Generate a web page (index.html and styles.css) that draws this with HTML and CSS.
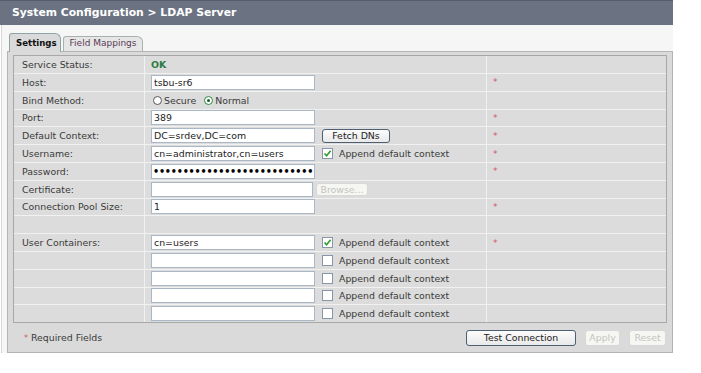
FILE: index.html
```html
<!DOCTYPE html>
<html lang="en">
<head>
	<meta charset="UTF-8">
	<title>LDAP Server</title>
	<link rel="stylesheet" href="styles.css">
</head>
<body>
	<div class="page">
		<div class="titlebar">System Configuration &gt; LDAP Server</div>
		<div class="frame">
			<div class="tabs">
				<span class="tab current">Settings</span>
				<span class="tab">Field Mappings</span>
			</div>
			<div class="panel">
				<div class="grid">
					<div class="row">
						<div class="lbl">Service Status:</div>
						<div class="val"><span class="ok">OK</span></div>
						<div class="req"></div>
					</div>
					<div class="row">
						<div class="lbl">Host:</div>
						<div class="val"><input class="txt" type="text" value="tsbu-sr6"></div>
						<div class="req">*</div>
					</div>
					<div class="row">
						<div class="lbl">Bind Method:</div>
						<div class="val">
							<span class="radio"></span><span class="opt">Secure</span>
							<span class="radio on"></span><span class="opt">Normal</span>
						</div>
						<div class="req"></div>
					</div>
					<div class="row">
						<div class="lbl">Port:</div>
						<div class="val"><input class="txt" type="text" value="389"></div>
						<div class="req">*</div>
					</div>
					<div class="row">
						<div class="lbl">Default Context:</div>
						<div class="val"><input class="txt" type="text" value="DC=srdev,DC=com"><button class="btn fetch">Fetch DNs</button></div>
						<div class="req">*</div>
					</div>
					<div class="row">
						<div class="lbl">Username:</div>
						<div class="val"><input class="txt" type="text" value="cn=administrator,cn=users"><span class="check on"><svg width="9" height="9" viewBox="0 0 9 9"><path d="M1.5 4.5 L3.6 6.8 L7.6 1.8" fill="none" stroke="#2f9a2f" stroke-width="1.6"/></svg></span><span class="chk-text">Append default context</span></div>
						<div class="req">*</div>
					</div>
					<div class="row">
						<div class="lbl">Password:</div>
						<div class="val"><input class="txt pass" type="text" value="&#8226;&#8226;&#8226;&#8226;&#8226;&#8226;&#8226;&#8226;&#8226;&#8226;&#8226;&#8226;&#8226;&#8226;&#8226;&#8226;&#8226;&#8226;&#8226;&#8226;&#8226;&#8226;&#8226;&#8226;&#8226;&#8226;&#8226;&#8226;"></div>
						<div class="req">*</div>
					</div>
					<div class="row">
						<div class="lbl">Certificate:</div>
						<div class="val"><input class="txt file" type="text" value=""><button class="btn off browse">Browse...</button></div>
						<div class="req"></div>
					</div>
					<div class="row">
						<div class="lbl">Connection Pool Size:</div>
						<div class="val"><input class="txt" type="text" value="1"></div>
						<div class="req">*</div>
					</div>
					<div class="row">
						<div class="lbl"></div>
						<div class="val"></div>
						<div class="req"></div>
					</div>
					<div class="row">
						<div class="lbl">User Containers:</div>
						<div class="val"><input class="txt" type="text" value="cn=users"><span class="check on"><svg width="9" height="9" viewBox="0 0 9 9"><path d="M1.5 4.5 L3.6 6.8 L7.6 1.8" fill="none" stroke="#2f9a2f" stroke-width="1.6"/></svg></span><span class="chk-text">Append default context</span></div>
						<div class="req">*</div>
					</div>
					<div class="row">
						<div class="lbl"></div>
						<div class="val"><input class="txt" type="text" value=""><span class="check"></span><span class="chk-text">Append default context</span></div>
						<div class="req"></div>
					</div>
					<div class="row">
						<div class="lbl"></div>
						<div class="val"><input class="txt" type="text" value=""><span class="check"></span><span class="chk-text">Append default context</span></div>
						<div class="req"></div>
					</div>
					<div class="row">
						<div class="lbl"></div>
						<div class="val"><input class="txt" type="text" value=""><span class="check"></span><span class="chk-text">Append default context</span></div>
						<div class="req"></div>
					</div>
					<div class="row">
						<div class="lbl"></div>
						<div class="val"><input class="txt" type="text" value=""><span class="check"></span><span class="chk-text">Append default context</span></div>
						<div class="req"></div>
					</div>
				</div>
				<div class="footer">
					<span class="note"><span class="star">*</span> Required Fields</span>
					<button class="btn test">Test Connection</button>
					<button class="btn off apply">Apply</button>
					<button class="btn off reset">Reset</button>
				</div>
			</div>
		</div>
	</div>
</body>
</html>
```

FILE: styles.css
```css
*{
	margin: 0;
	padding: 0;
	box-sizing: border-box;
}
body{
	background: #fff;
	font-family: "DejaVu Sans", Verdana, sans-serif;
	font-size: 9.4px;
	color: #3a3a3a;
}
.page{
	width: 673px;
}
.titlebar{
	height: 25px;
	background: #6b7383;
	border-top: 1px solid #555d6a;
	color: #fff;
	font-weight: bold;
	font-size: 10.8px;
	padding: 5px 0 0 12px;
}
.frame{
	margin-left: 1px;
	border-left: 1px solid #d6d6d6;
	background: #f6f6f6;
	padding-top: 8px;
}
.tabs{
	display: flex;
	align-items: flex-end;
	margin-left: 7px;
	height: 18px;
	position: relative;
	z-index: 1;
}
.tab{
	height: 15px;
	border: 1px solid #a9b0b0;
	border-bottom: none;
	border-radius: 3px 6px 0 0;
	background: #e6e6e6;
	color: #5a3b57;
	padding: 1px 5px 0 6px;
	margin-right: 2px;
	font-size: 9px;
}
.tab.current{
	height: 19px;
	margin-bottom: -1px;
	background: #dadada;
	border-color: #8fa4a4;
	color: #111;
	font-weight: bold;
	font-size: 8.6px;
	padding: 4px 3px 0 6px;
}
.panel{
	margin-left: 5px;
	border: 1px solid #b4b4b4;
	background: #dadada;
	padding: 3px 5px 0 5px;
}
.grid{
	border: 1px solid #a8a8a8;
	background: #dcdcdc;
}
.row{
	display: grid;
	grid-template-columns: 131px 342px 1fr;
	height: 17.8px;
	border-top: 1px solid #f1f1f1;
}
.row:first-child{
	border-top: none;
	height: 17px;
}
.lbl{
	border-right: 1px solid #f1f1f1;
	padding-left: 8px;
	display: flex;
	align-items: center;
}
.val{
	border-right: 1px solid #f1f1f1;
	padding-left: 6px;
	display: flex;
	align-items: center;
}
.req{
	color: #d2566e;
	padding-left: 6px;
	display: flex;
	align-items: center;
	font-size: 9px;
}
.ok{
	color: #2b7a44;
	font-weight: bold;
}
.txt{
	width: 164px;
	height: 15px;
	border: 1px solid #a9b7c6;
	background: #fff;
	font-family: "DejaVu Sans", Verdana, sans-serif;
	font-size: 9.4px;
	color: #222;
	padding: 0 2px;
	outline: none;
}
.txt.file{
	width: 162px;
}
.txt.pass{
	font-size: 9.6px;
	font-weight: bold;
	letter-spacing: -0.2px;
	padding: 0 1px;
	color: #000;
}
.radio{
	width: 9px;
	height: 9px;
	border: 1px solid #555;
	border-radius: 50%;
	background: #fff;
	margin: 0 2px 0 2px;
	position: relative;
}
.radio.on{
	border-color: #2a8a3a;
}
.radio.on::after{
	content: "";
	position: absolute;
	left: 2px;
	top: 2px;
	width: 3px;
	height: 3px;
	border-radius: 50%;
	background: #1c5a2c;
}
.opt{
	margin-right: 6px;
}
.check{
	width: 11px;
	height: 11px;
	border: 1px solid #8796a8;
	background: #fff;
	margin-left: 7px;
	margin-right: 6px;
	display: flex;
	align-items: center;
	justify-content: center;
}
.btn{
	font-family: "DejaVu Sans", Verdana, sans-serif;
	font-size: 9.4px;
	color: #222;
	background: linear-gradient(#fcfcfc, #e9e9e9);
	border: 1px solid #4e5f74;
	border-radius: 3px;
	height: 14px;
	line-height: 12px;
}
.btn.off{
	color: #c4c4c4;
	border-color: #d8d8d8;
	background: #f6f6f2;
}
.fetch{
	width: 68px;
	margin-left: 7px;
}
.browse{
	width: 52px;
	height: 13px;
	margin-left: 3px;
}
.footer{
	height: 29px;
	display: flex;
	align-items: center;
	padding: 0 1px 0 11px;
}
.note{
	flex: 1;
	color: #3a3a3a;
}
.star{
	color: #d2566e;
	font-size: 8px;
}
.test{
	width: 110px;
	height: 16px;
}
.apply{
	width: 35px;
	height: 16px;
	margin-left: 9px;
}
.reset{
	width: 37px;
	height: 16px;
	margin-left: 9px;
}
```
